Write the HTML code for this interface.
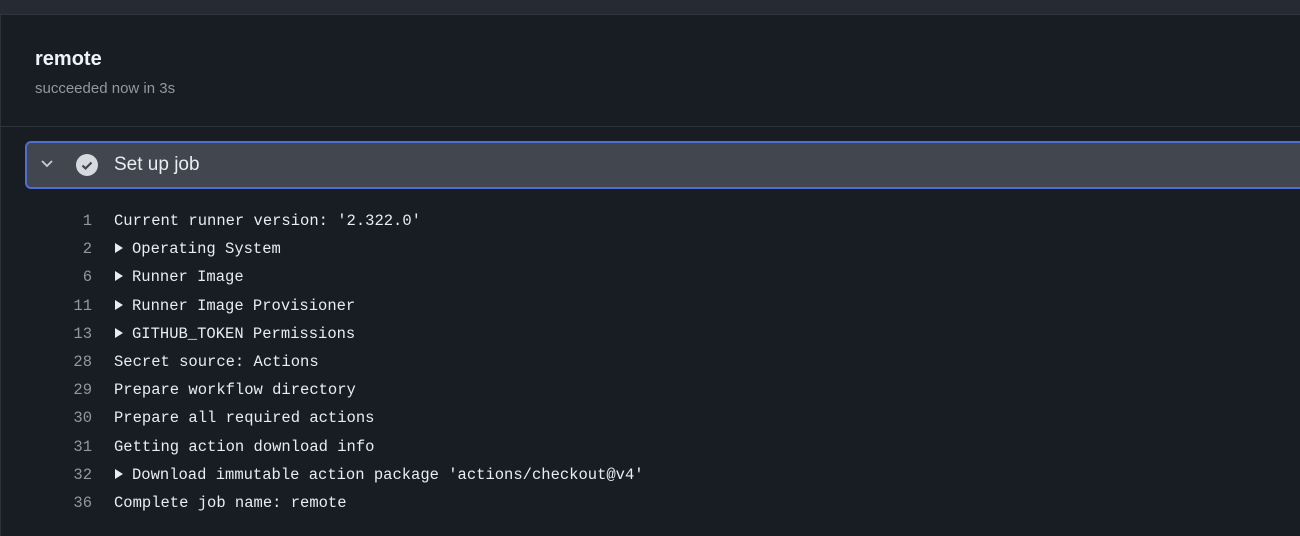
<!DOCTYPE html>
<html><head><meta charset="utf-8"><style>
html,body{margin:0;padding:0;width:1300px;height:536px;overflow:hidden;background:#181c23;font-family:"Liberation Sans",sans-serif}
.top{position:absolute;left:0;top:0;width:1300px;height:14px;background:#262a33;border-bottom:1px solid #31353d}
.panel{position:absolute;left:0;top:15px;width:1300px;height:521px;background:#181c23;border-left:1px solid #2c3038}
.t{position:absolute;left:35px;top:48px;color:#f0f3f6;font-size:20px;font-weight:bold}
.s{position:absolute;left:35px;top:80px;color:#9198a1;font-size:15px}
.div{position:absolute;left:1px;top:126px;width:1299px;height:1px;background:#2f333b}
.step{position:absolute;left:25px;top:141px;width:1290px;height:44px;background:#42464e;border:2px solid #4f6fd0;border-radius:6px;box-sizing:content-box}
.st{position:absolute;left:87px;top:11px;color:#e6edf3;font-size:19px}
.log{position:absolute;left:0;top:207px;font-family:"Liberation Mono",monospace;font-size:15.5px;color:#e6edf3}
.l{height:28.2px;line-height:28px;position:relative;white-space:pre}
.n{position:absolute;right:-92px;width:40px;text-align:right;color:#9198a1}
.c{position:absolute;left:114px}
.tr{display:inline-block;width:18px;height:10px;position:relative}
.tr:before{content:"";position:absolute;left:1px;top:0;border-left:8px solid #e6edf3;border-top:5px solid transparent;border-bottom:5px solid transparent}
</style></head><body>
<div class="top"></div>
<div class="panel"></div>
<div class="t">remote</div>
<div class="s">succeeded now in 3s</div>
<div class="div"></div>
<div class="step">
<svg style="position:absolute;left:13px;top:16px" width="14" height="10" viewBox="0 0 14 10"><path d="M2 2l5 5 5-5" stroke="#c9ced4" stroke-width="1.8" fill="none"/></svg>
<svg style="position:absolute;left:48px;top:10px" width="24" height="24" viewBox="0 0 24 24"><circle cx="12" cy="12" r="11" fill="#d6d9dd"/><path d="M7.5 12.5l3 3 6-6" stroke="#42464e" stroke-width="2.2" fill="none"/></svg>
<div class="st">Set up job</div>
</div>
<div class="log">
<div class="l"><span class="n" style="left:52px">1</span><span class="c">Current runner version: '2.322.0'</span></div>
<div class="l"><span class="n" style="left:52px">2</span><span class="c"><span class="tr"></span>Operating System</span></div>
<div class="l"><span class="n" style="left:52px">6</span><span class="c"><span class="tr"></span>Runner Image</span></div>
<div class="l"><span class="n" style="left:52px">11</span><span class="c"><span class="tr"></span>Runner Image Provisioner</span></div>
<div class="l"><span class="n" style="left:52px">13</span><span class="c"><span class="tr"></span>GITHUB_TOKEN Permissions</span></div>
<div class="l"><span class="n" style="left:52px">28</span><span class="c">Secret source: Actions</span></div>
<div class="l"><span class="n" style="left:52px">29</span><span class="c">Prepare workflow directory</span></div>
<div class="l"><span class="n" style="left:52px">30</span><span class="c">Prepare all required actions</span></div>
<div class="l"><span class="n" style="left:52px">31</span><span class="c">Getting action download info</span></div>
<div class="l"><span class="n" style="left:52px">32</span><span class="c"><span class="tr"></span>Download immutable action package 'actions/checkout@v4'</span></div>
<div class="l"><span class="n" style="left:52px">36</span><span class="c">Complete job name: remote</span></div>
</div>
</body></html>
